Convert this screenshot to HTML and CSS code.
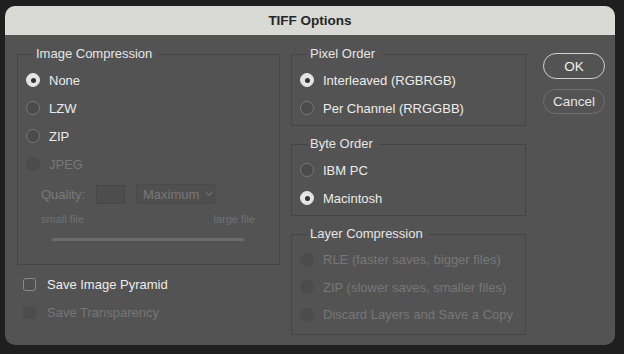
FILE: index.html
```html
<!DOCTYPE html>
<html>
<head>
<meta charset="utf-8">
<link rel="stylesheet" href="styles.css">
</head>
<body>
<div class="dialog">
  <div class="titlebar">TIFF Options</div>
  <div class="content">
    <div class="col-left">
      <fieldset class="group group-compression">
        <legend>Image Compression</legend>
        <div class="radio-row"><span class="radio checked"></span><span class="lbl">None</span></div>
        <div class="radio-row"><span class="radio"></span><span class="lbl">LZW</span></div>
        <div class="radio-row"><span class="radio"></span><span class="lbl">ZIP</span></div>
        <div class="radio-row disabled"><span class="radio"></span><span class="lbl">JPEG</span></div>
        <div class="quality-row">
          <span class="quality-lbl">Quality:</span>
          <span class="quality-box"></span>
          <span class="select">Maximum<svg class="chev" width="8" height="6" viewBox="0 0 8 6"><path d="M1 1.5 L4 4.5 L7 1.5" fill="none" stroke="#6e6e6e" stroke-width="1.2"/></svg></span>
        </div>
        <div class="size-row"><span>small file</span><span>large file</span></div>
        <div class="slider"></div>
      </fieldset>
      <div class="check-row"><span class="check"></span><span class="lbl">Save Image Pyramid</span></div>
      <div class="check-row disabled"><span class="check"></span><span class="lbl">Save Transparency</span></div>
    </div>
    <div class="col-mid">
      <fieldset class="group">
        <legend>Pixel Order</legend>
        <div class="radio-row"><span class="radio checked"></span><span class="lbl">Interleaved (RGBRGB)</span></div>
        <div class="radio-row"><span class="radio"></span><span class="lbl">Per Channel (RRGGBB)</span></div>
      </fieldset>
      <fieldset class="group">
        <legend>Byte Order</legend>
        <div class="radio-row"><span class="radio"></span><span class="lbl">IBM PC</span></div>
        <div class="radio-row"><span class="radio checked"></span><span class="lbl">Macintosh</span></div>
      </fieldset>
      <fieldset class="group group-layer">
        <legend>Layer Compression</legend>
        <div class="radio-row disabled"><span class="radio"></span><span class="lbl">RLE (faster saves, bigger files)</span></div>
        <div class="radio-row disabled"><span class="radio"></span><span class="lbl">ZIP (slower saves, smaller files)</span></div>
        <div class="radio-row disabled"><span class="radio"></span><span class="lbl">Discard Layers and Save a Copy</span></div>
      </fieldset>
    </div>
    <div class="col-btn">
      <div class="btn btn-ok">OK</div>
      <div class="btn btn-cancel">Cancel</div>
    </div>
  </div>
</div>
</body>
</html>
```
FILE: styles.css
```css
html, body {
  margin: 0;
  padding: 0;
  background: #1f1f1f;
  font-family: "Liberation Sans", Arial, sans-serif;
}
body {
  width: 624px;
  height: 354px;
  overflow: hidden;
}
.dialog {
  margin: 6px 0 0 5px;
  width: 610px;
  height: 339px;
  background: #535353;
  border-radius: 10px;
  overflow: hidden;
}
.titlebar {
  height: 29px;
  background: #d9d9d6;
  color: #262626;
  font-weight: bold;
  font-size: 13.5px;
  display: flex;
  align-items: center;
  justify-content: center;
}
.content {
  display: flex;
  padding: 11px 0 0 12px;
}
.col-left {
  width: 263px;
  display: flex;
  flex-direction: column;
}
.col-mid {
  width: 235px;
  margin-left: 11px;
  display: flex;
  flex-direction: column;
  gap: 10px;
}
.col-btn {
  width: 62px;
  margin-left: 17px;
  padding-top: 7px;
  display: flex;
  flex-direction: column;
  gap: 10px;
}
.group {
  margin: 0;
  padding: 4px 0 3px 8px;
  border: 1px solid #464646;
  min-width: 0;
}
.group legend {
  padding: 0 6px 0 3px;
  margin-left: 7px;
  font-size: 13px;
  line-height: 16px;
  color: #e6e6e6;
}
.group-compression {
  padding-bottom: 23px;
}
.group-layer {
  padding-bottom: 5px;
}
.radio-row {
  height: 28px;
  display: flex;
  align-items: center;
  font-size: 13px;
  color: #ececec;
}
.group-layer .radio-row {
  height: 27.5px;
}
.radio {
  box-sizing: border-box;
  width: 14px;
  height: 14px;
  border-radius: 50%;
  border: 1px solid #767676;
  background: #4b4b4b;
  margin-right: 9px;
  flex: none;
  position: relative;
}
.radio.checked {
  background: #e4e4e4;
  border-color: #e4e4e4;
}
.radio.checked::after {
  content: "";
  position: absolute;
  left: 3.5px;
  top: 3.5px;
  width: 5px;
  height: 5px;
  border-radius: 50%;
  background: #333;
}
.radio-row.disabled {
  color: #777;
}
.radio-row.disabled .radio {
  border-color: #4c4c4c;
  background: #4c4c4c;
}
.quality-row {
  margin-top: 6px;
  height: 20px;
  display: flex;
  align-items: center;
  padding-left: 15px;
  font-size: 13px;
  color: #7a7a7a;
}
.quality-lbl {
  width: 55px;
}
.quality-box {
  box-sizing: border-box;
  width: 29px;
  height: 19px;
  background: #4d4d4d;
  border: 1px solid #474747;
}
.select {
  box-sizing: border-box;
  margin-left: 11px;
  width: 79px;
  height: 20px;
  background: #4f4f4f;
  border: 1px solid #4a4a4a;
  display: flex;
  align-items: center;
  padding-left: 6px;
  color: #787878;
}
.chev {
  margin-left: 6px;
}
.size-row {
  margin-top: 8px;
  height: 14px;
  line-height: 14px;
  display: flex;
  justify-content: space-between;
  padding-left: 15px;
  padding-right: 24px;
  font-size: 11px;
  color: #717171;
}
.slider {
  margin: 12px 0 0 26px;
  width: 192px;
  height: 3px;
  border-radius: 2px;
  background: #6b6b6b;
}
.check-row {
  height: 28px;
  display: flex;
  align-items: center;
  padding-left: 6px;
  font-size: 13px;
  color: #ececec;
}
.col-left .group + .check-row {
  margin-top: 5px;
}
.check {
  box-sizing: border-box;
  width: 13px;
  height: 13px;
  border-radius: 3px;
  border: 1px solid #8a8a8a;
  background: #505050;
  margin-right: 11px;
  flex: none;
}
.check-row.disabled {
  color: #777;
}
.check-row.disabled .check {
  border-color: #4c4c4c;
  background: #4c4c4c;
}
.btn {
  box-sizing: border-box;
  height: 26px;
  border-radius: 13px;
  display: flex;
  align-items: center;
  justify-content: center;
  font-size: 13.5px;
  color: #f0f0f0;
}
.btn-ok {
  border: 1.5px solid #cfcfcf;
}
.btn-cancel {
  height: 25px;
  border: 1.5px solid #6f6f6f;
  color: #e6e6e6;
}
```
